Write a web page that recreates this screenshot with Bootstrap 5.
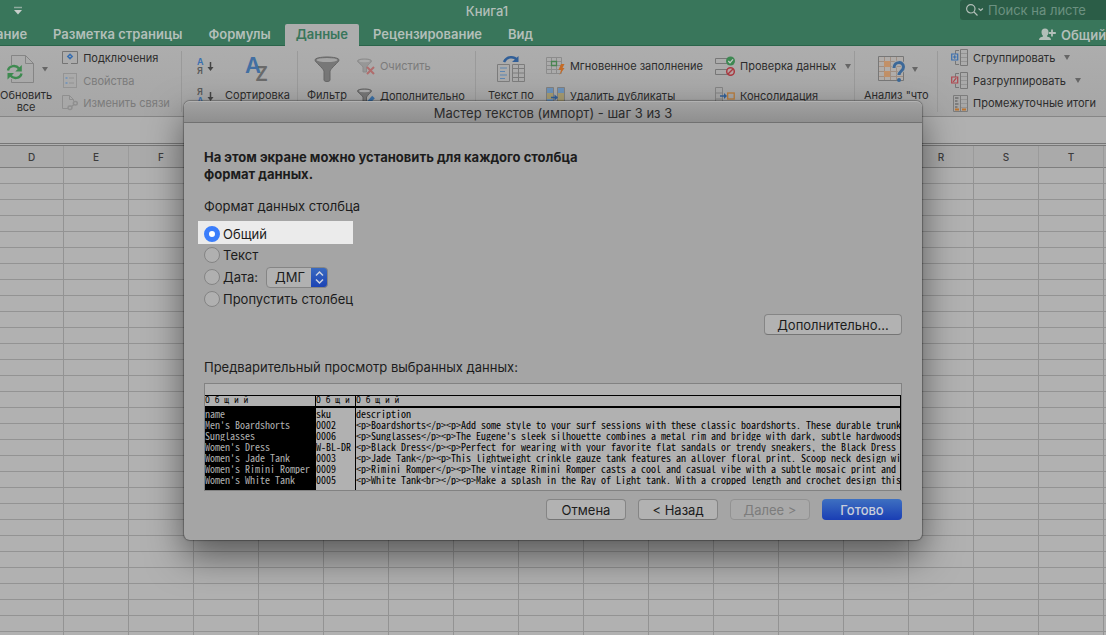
<!DOCTYPE html>
<html lang="ru">
<head>
<meta charset="utf-8">
<meta name="viewport" content="width=device-width, initial-scale=1">
<title>Книга1</title>
<link href="https://cdn.jsdelivr.net/npm/bootstrap@5.3.0/dist/css/bootstrap.min.css" rel="stylesheet">
<style>
body { font-family: Inter, "Liberation Sans", sans-serif; font-size: 13px; line-height: 16px; color: #1c1c1c; background: #b1b1b1; height: 100vh; overflow: hidden; }
button { font-family: inherit; }
svg { display: block; flex: none; }
main { min-height: 0; }

/* Title bar and tabs */
.app-head { background: #39765b; border-bottom: 1px solid #2a644a; color: #b3bfb9; }
.title-row { height: 24px; }
.doc-title { top: 3px; padding-right: 132px; font-weight: 500; }
.quick-menu { left: 14px; top: 6px; }
.search-box { background: #2b5d47; width: 146px; height: 20px; border-radius: 3px 0 0 3px; padding-left: 6px; gap: 4px; }
.search-box input { background: none; border: 0; padding: 0; width: 100%; outline: 0; color: #b3bfb9; }
.search-box input::placeholder { color: #6c9181; opacity: 1; }
.tab-row { height: 21px; font-weight: 600; }
.tab-row a { color: #b3bfb9; text-decoration: none; padding: 2px 13px 0; white-space: nowrap; }
.tab-row a.first-tab { padding-left: 0; margin-left: -4px; }
.tab-row a.active { background: #adadad; color: #39765b; padding: 2px 11px 0; margin: 0 1px; border-radius: 2px 2px 0 0; height: 22px; }
.share-btn { border: 0; background: none; color: #b3bfb9; font-weight: 600; padding: 0; width: 67px; white-space: nowrap; gap: 4px; }

/* Ribbon */
.ribbon { height: 71px; flex: none; background: linear-gradient(#adadad, #a6a6a6); border-bottom: 1px solid #868686; font-size: 11px; line-height: 12px; }
.rgroup { border-right: 1px solid #9a9a9a; margin: 5px 0 4px; flex: none; }
.rgroup:last-child { border: 0; }
.rgroup button { border: 0; background: none; padding: 0; color: #2c2c2c; white-space: nowrap; }
.rgroup button:disabled { color: #7b7b7b; }
.rgroup button.tall { display: flex; flex-direction: column; align-items: center; gap: 6px; padding-top: 4px; }
.tall .pic { height: 28px; display: flex; align-items: center; gap: 6px; }
.flat { display: flex; align-items: center; gap: 5px; height: 18px; }
.three { display: flex; flex-direction: column; gap: 5px; margin-top: -2px; }
.two { display: flex; flex-direction: column; gap: 12px; padding-top: 6px; }
.g-conn { width: 182px; gap: 10px; }
.g-sort { width: 116px; gap: 10px; padding-left: 15px; }
.g-filter { width: 178px; gap: 10px; padding-left: 9px; }
.g-data { width: 379px; gap: 12px; padding-left: 12px; }
.g-what { width: 83px; padding-left: 9px; }
.g-outline { padding-left: 13px; }

/* Sheet */
.formula-bar { height: 29px; border-bottom: 3px double #777; background: #b0b0b0; }
.sheet { table-layout: fixed; width: 1234px; border-collapse: separate; border-spacing: 0; }
.sheet col { width: 65px; }
.sheet col:first-child { width: 64px; }
.sheet th { height: 22px; padding: 0; text-align: center; font-weight: 500; font-size: 10px; line-height: 12px; color: #3c3c3c; background: #aaa; border-right: 1px solid #9b9b9b; border-bottom: 1px solid #7e7e7e; }
.sheet td { height: 16px; padding: 0; border-right: 1px solid #939393; border-bottom: 1px solid #939393; }

/* Wizard window */
.wizard { top: 101px; width: 738px; background: #a5a5a5; border-radius: 6px; box-shadow: 0 0 1px 1px rgba(0,0,0,.28), 0 16px 36px rgba(0,0,0,.5); }
.wizard-title { height: 22px; line-height: 22px; background: linear-gradient(#a1a1a1, #8f8f8f); border-bottom: 1px solid #717171; border-radius: 6px 6px 0 0; color: #2b2b2b; border-top: 1px solid #b2b2b2; }
.wizard-body { padding: 26px 20px 20px; }
.wizard-body h1 { font-size: 13px; line-height: 17px; font-weight: 700; margin: 0 0 15px; max-width: 400px; }
.wizard-body legend { font-size: 13px; line-height: 16px; margin: 0 0 7px; }
.pick { height: 22px; gap: 3px; }
.pick.chosen { background: #ebebeb; width: 155px; height: 23px; margin-left: -6px; padding: 2px 0 0 6px; }
.pick input { appearance: none; width: 16px; height: 16px; margin: 0; border-radius: 50%; background: #b0b0b0; border: 1px solid #848484; flex: none; }
.pick input:checked { border: 5px solid #3a7dfb; background: #fff; }
.date-select { appearance: none; height: 21px; width: 62px; margin-left: 5px; border: 1px solid #858585; border-radius: 4px; padding: 0 0 0 8px; font-size: 13px; color: #1c1c1c; line-height: 18px;
  background: url("data:image/svg+xml,%3Csvg xmlns='http://www.w3.org/2000/svg' width='17' height='21'%3E%3Cpath d='M5 8.500l3.500-3.500L12 8.500M5 12.500l3.500 3.500L12 12.500' fill='none' stroke='%23ccd3e2' stroke-width='1.500'/%3E%3C/svg%3E") right / 17px 21px no-repeat border-box, linear-gradient(#3b6cc0, #1a41b5) right / 17px 21px no-repeat border-box, #b1b1b1; }
.mac-btn { height: 21px; width: 80px; padding: 0; border: 1px solid #858585; border-bottom-color: #757575; border-radius: 4px; background: #b2b2b2; color: #1c1c1c; font-size: 13px; line-height: 18px; }
.mac-btn.wide-btn { width: 138px; }
.mac-btn:disabled { background: #a9a9a9; border-color: #929292; color: #7c7c7c; }
.mac-btn.go-btn { background: linear-gradient(#3e70c1, #1a3eb4); border: 0; color: #c9cedb; font-weight: 500; }
.wizard-actions { gap: 12px; }
.preview { margin-top: 8px; border: 1px solid #828282; background: #b1b1b1; padding-top: 11px; height: 108px; overflow: hidden; }
.preview table { table-layout: fixed; width: 100%; border-collapse: separate; border-spacing: 0; font-family: "Noto Sans Mono CJK SC", "DejaVu Sans Mono", monospace; font-size: 10px; line-height: 11px; color: #000; }
.preview th, .preview td { padding: 0; height: 11px; white-space: pre; overflow: hidden; font-weight: 400; border-right: 1px solid #000; }
.preview th { font-family: "DejaVu Sans Mono", monospace; font-size: 8px; border-top: 1px solid #000; border-bottom: 2px solid #000; height: 13px; line-height: 10px; }
.preview td:first-child { background: #000; color: #b1b1b1; }
.preview tr.tail td { height: 8px; }
</style>
</head>
<body class="d-flex flex-column">
<svg width="0" height="0" class="position-absolute" aria-hidden="true">
  <symbol id="tri" viewBox="0 0 6 5"><path d="M0 0h6L3 5z" fill="#666"/></symbol>
</svg>

<header class="app-head">
  <div class="title-row position-relative d-flex justify-content-end">
    <svg class="quick-menu position-absolute" width="8" height="9"><path d="M0 1.500h8" stroke="#8fab9e" stroke-width="1.500"/><path d="M0 4h8L4 8.500z" fill="#c8cecb"/></svg>
    <div class="doc-title position-absolute start-0 end-0 text-center pe-none">Книга1</div>
    <div class="search-box d-flex align-items-center">
      <svg width="18" height="12" fill="none" stroke="#b3bfb9" stroke-width="1.200"><circle cx="4.800" cy="4.800" r="4.200"/><path d="M8 8l3.500 3.500M12.500 4.500l2.200 2 2.200-2"/></svg>
      <input type="text" placeholder="Поиск на листе" aria-label="Поиск на листе">
    </div>
  </div>
  <div class="tab-row d-flex">
    <nav class="d-flex flex-grow-1" aria-label="Вкладки ленты">
      <a href="#" class="first-tab">ание</a>
      <a href="#">Разметка страницы</a>
      <a href="#">Формулы</a>
      <a href="#" class="active" aria-current="page">Данные</a>
      <a href="#">Рецензирование</a>
      <a href="#">Вид</a>
    </nav>
    <button class="share-btn d-flex align-items-center" type="button">
      <svg width="18" height="13" fill="#b3bfb9"><path d="M2.500 4a3.500 3.500 0 0 1 7 0c0 2-.8 3.200-1.500 3.700v.8c2 .6 4 1.200 4 3.500H0c0-2.300 2-2.900 4-3.500v-.8C3.300 7.200 2.500 6 2.500 4z"/><path d="M13 1.500v7M9.800 5h7" stroke="#b3bfb9" stroke-width="1.800"/></svg>
      <span>Общий</span>
    </button>
  </div>
</header>

<section class="ribbon d-flex overflow-hidden">
  <div class="rgroup g-conn d-flex">
    <button type="button" class="tall">
      <span class="pic"><svg width="46" height="28" viewBox="0 0 46 28" fill="none"><path d="M8.500.5h14l8 8v19h-22z" stroke="#858585"/><path d="M22.500.5v8h8" stroke="#858585"/><rect x="4" y="10" width="16" height="14" fill="#aaa"/><path d="M5 15.500c1-5 8-6 11-2M18.500 18.500c-1 5-8 6-11 2" stroke="#3e8a50" stroke-width="2.400"/><path d="M18.800 10v6.500h-6.500zM4.500 24.500V18H11z" fill="#3e8a50"/><path d="M39 12h6l-3 4.500z" fill="#666"/></svg></span>
      <span>Обновить<br>все</span>
    </button>
    <div class="three">
      <button type="button" class="flat"><svg width="16" height="15" fill="none"><path d="M.5 1.500h15v12H9M.5 1.500v12H6" stroke="#747474"/><path d="M8 4.200L10.200 6.400 8 8.600 5.800 6.400z" stroke="#3a6fb0" stroke-width="1.500"/></svg>Подключения</button>
      <button type="button" class="flat" disabled><svg width="16" height="15" fill="none"><rect x="1.500" y=".5" width="13" height="14" stroke="#949494"/><path d="M3.500 5h2M3.500 10h2" stroke="#7896b8" stroke-width="2"/><path d="M7 5h5M7 10h5" stroke="#929292"/></svg>Свойства</button>
      <button type="button" class="flat" disabled><svg width="16" height="16" fill="none" stroke="#8f8f8f"><path d="M6 13.500H.5V.5h7l4 4V6M7.500.5v4h4"/><g stroke-width="1.500"><rect x="6" y="11" width="4" height="3.500" rx="1.700"/><rect x="11.300" y="6.500" width="4" height="3.500" rx="1.700"/><path d="M9 12l3.500-3"/></g></svg>Изменить связи</button>
    </div>
  </div>

  <div class="rgroup g-sort d-flex">
    <div class="two">
      <button type="button" aria-label="Сортировка от А до Я" class="flat"><svg width="18" height="18" font-family="Inter" font-size="9" font-weight="600"><text x="0" y="8" fill="#3a6fb0">А</text><text x="0" y="17" fill="#5a5a5a">Я</text><path d="M13.500 5v7" stroke="#444" stroke-width="1.500"/><path d="M10.500 10h6l-3 4z" fill="#444"/></svg></button>
      <button type="button" aria-label="Сортировка от Я до А" class="flat"><svg width="18" height="18" font-family="Inter" font-size="9" font-weight="600"><text x="0" y="8" fill="#5a5a5a">Я</text><text x="0" y="17" fill="#3a6fb0">А</text><path d="M13.500 5v7" stroke="#444" stroke-width="1.500"/><path d="M10.500 10h6l-3 4z" fill="#444"/></svg></button>
    </div>
    <button type="button" class="tall"><span class="pic"><svg width="26" height="28" font-family="Inter" font-weight="600"><text x="11" y="26" font-size="20" fill="#6a6a6a">Z</text><text x="1" y="18" font-size="22" fill="#426fa2">A</text></svg></span><span>Сортировка</span></button>
  </div>

  <div class="rgroup g-filter d-flex">
    <button type="button" class="tall"><span class="pic"><svg width="26" height="26"><path d="M1 4c0-4 24-4 24 0 0 2-8 8-9 11v9c0 2-6 2-6 0v-9C9 12 1 6 1 4z" fill="#777" stroke="#666"/><ellipse cx="13" cy="4" rx="10.500" ry="2" fill="#a5a5a5"/></svg></span><span>Фильтр</span></button>
    <div class="two">
      <button type="button" class="flat" disabled><svg width="18" height="17"><path d="M.5 3c0-2.700 14-2.700 14 0 0 1.300-4 4-5 6v5H6V9C5 7 .5 4.300.5 3z" fill="#979797" stroke="#8b8b8b"/><ellipse cx="7.500" cy="3" rx="5.500" ry="1.200" fill="#aaa"/><path d="M10 9l7 7M17 9l-7 7" stroke="#b06d6d" stroke-width="2"/></svg>Очистить</button>
      <button type="button" class="flat"><svg width="18" height="17"><path d="M.5 3c0-2.700 14-2.700 14 0 0 1.300-4 4-5 6v5H6V9C5 7 .5 4.300.5 3z" fill="#777" stroke="#606060"/><ellipse cx="7.500" cy="3" rx="5.500" ry="1.200" fill="#aaa"/><path d="M11 15l5.500-6" stroke="#3a6fa5" stroke-width="3.500"/></svg>Дополнительно</button>
    </div>
  </div>

  <div class="rgroup g-data d-flex">
    <button type="button" class="tall"><span class="pic"><svg width="28" height="28" fill="none"><path d="M7 7c3-6 10-6 13-2" stroke="#315f98" stroke-width="2.500"/><path d="M21.500 1v6h-6.500z" fill="#315f98"/><path d="M.5 9.500h12v17H.5zM15.500 9.500h12v17h-12zM15.500 13.500h12M15.500 18h12M15.500 22.500h12M21.500 9.500v17" stroke="#7c7c7c"/><path d="M3 13h7M3 16.500h5M3 20h7M3 23.500h5" stroke="#5d86b1"/></svg></span><span>Текст по</span></button>
    <div class="two">
      <button type="button" class="flat"><svg width="19" height="18" fill="none"><path d="M.5.5h15v16H.5zM.5 4.500h15M.5 8.500h15M.5 12.500h15M5.500.5v16M10.500.5v16" stroke="#8c8c8c"/><path d="M5.500 4.500h5v4h-5z" stroke="#488551" stroke-width="1.300"/><path d="M15 7h3.500l-2 4h2l-5 7 1.500-5h-2.500z" fill="#c46b27"/></svg>Мгновенное заполнение</button>
      <button type="button" class="flat"><svg width="19" height="18" fill="none"><path d="M.5.5h7v17h-7zM11.500.5h7v17h-7z" fill="#a79c72" stroke="#808080"/><path d="M1 1h6v5H1zM12 1h6v5h-6zM1 12h6v5H1z" fill="#6c93bb"/><path d="M5 10.500h5" stroke="#315f98" stroke-width="1.500"/><path d="M8.500 7.500v6l3.500-3z" fill="#315f98"/></svg>Удалить дубликаты</button>
    </div>
    <div class="two">
      <button type="button" class="flat"><svg width="20" height="20" fill="none"><path d="M.5 2.500h12v5H.5zM.5 13.500h12v5H.5z" stroke="#777"/><circle cx="15.500" cy="5" r="4.500" fill="#3d8852"/><path d="M13.300 5l1.700 1.800 3-3.500" stroke="#c1c9c3" stroke-width="1.300"/><circle cx="15.500" cy="15.500" r="3.800" fill="#b5a5a5" stroke="#a93a42" stroke-width="1.500"/><path d="M13 18l5-5" stroke="#a93a42" stroke-width="1.500"/></svg><span class="me-1">Проверка данных</span><svg width="6" height="5"><use href="#tri"/></svg></button>
      <button type="button" class="flat"><svg width="20" height="18" fill="none"><path d="M.5.500h7v17h-7zM.5 6h7M.5 12h7" stroke="#858585"/><path d="M5 9h5" stroke="#315f98" stroke-width="1.500"/><path d="M9 6v6l3-3z" fill="#315f98"/><rect x="12.700" y="6" width="6.500" height="6" stroke="#ba7c3a" stroke-width="1.300"/></svg>Консолидация</button>
    </div>
  </div>

  <div class="rgroup g-what d-flex">
    <button type="button" class="tall"><span class="pic"><svg class="ms-1" width="28" height="28" fill="none"><path d="M.5 1.500h25v24H.5z" fill="#b1adaa"/><path d="M.5 6.500h25M.5 11.500h25M.5 16.500h25M.5 21.500h25M6.500 1.500v24M12.500 1.500v24M18.500 1.500v24" stroke="#a08f83"/><path d="M.5 1.500h25v24H.5z" stroke="#777"/><path d="M6 6h6v6H6zM6 16h6v6H6z" fill="#c29067"/><path d="M16 13c0-7 9.500-7 9.500-1 0 4-4.500 4-4.500 8" stroke="#aaa" stroke-width="5"/><path d="M16 13c0-7 9.500-7 9.500-1 0 4-4.500 4-4.500 8" stroke="#3c6898" stroke-width="3"/><circle cx="21" cy="25" r="2" fill="#3c6898"/></svg><svg width="6" height="5"><use href="#tri"/></svg></span><span>Анализ "что</span></button>
  </div>

  <div class="rgroup g-outline d-flex">
    <div class="three">
      <button type="button" class="flat"><svg width="17" height="17" fill="none"><path d="M9.500.500h7v16h-7z" stroke="#777"/><path d="M10 4.500h6M10 8.500h6M10 12.500h6" stroke="#949494"/><path d="M8 1.500H4.500V5M4.500 12v3.500H8" stroke="#777"/><path d="M.7 5h6v6h-6zM3.700 6.200v3.600M1.900 8h3.600" stroke="#3a6fb0" stroke-width="1.200"/></svg><span class="me-1">Сгруппировать</span><svg width="6" height="5"><use href="#tri"/></svg></button>
      <button type="button" class="flat"><svg width="17" height="17" fill="none"><path d="M9.500.500h7v16h-7z" stroke="#777"/><path d="M10 4.500h6M10 8.500h6M10 12.500h6" stroke="#949494"/><path d="M8 1.500H4.500V5M4.500 12v3.500H8" stroke="#777"/><path d="M.7 5h6v6h-6zM2.200 9.800l3-3.600" stroke="#b0444c" stroke-width="1.200"/></svg><span class="me-1">Разгруппировать</span><svg width="6" height="5"><use href="#tri"/></svg></button>
      <button type="button" class="flat"><svg width="17" height="17" fill="none"><path d="M2.500.500h14v16h-14zM9.500.500v16" stroke="#7c7c7c"/><path d="M10 4.500h6M10 8.500h6M10 12.500h6" stroke="#949494"/><path d="M4 3h3.500M4 6h2.500M4 9h3.500M4 12h2.500" stroke="#555"/><path d="M4 14.500h4M11 14.500h4" stroke="#bd742f" stroke-width="2"/></svg>Промежуточные итоги</button>
    </div>
  </div>
</section>

<main class="flex-fill overflow-hidden">
  <div class="formula-bar"></div>
  <table class="sheet">
    <colgroup id="cols"></colgroup>
    <thead><tr id="letters"></tr></thead>
    <tbody id="cells"></tbody>
  </table>
</main>

<div class="position-absolute start-0 end-0 mx-auto wizard" role="dialog" aria-labelledby="wizTitle">
  <div class="wizard-title text-center" id="wizTitle">Мастер текстов (импорт) - шаг 3 из 3</div>
  <form class="wizard-body">
    <h1>На этом экране можно установить для каждого столбца формат данных.</h1>
    <fieldset>
      <legend>Формат данных столбца</legend>
      <div class="pick chosen d-flex align-items-center"><input type="radio" name="fmt" id="fGeneral" checked><label for="fGeneral">Общий</label></div>
      <div class="pick d-flex align-items-center"><input type="radio" name="fmt" id="fText"><label for="fText">Текст</label></div>
      <div class="pick d-flex align-items-center"><input type="radio" name="fmt" id="fDate"><label for="fDate">Дата:</label>
        <select class="date-select" aria-label="Порядок даты"><option>ДМГ</option></select></div>
      <div class="pick d-flex align-items-center"><input type="radio" name="fmt" id="fSkip"><label for="fSkip">Пропустить столбец</label></div>
    </fieldset>
    <div class="d-flex justify-content-end mt-1"><button type="button" class="mac-btn wide-btn">Дополнительно...</button></div>
    <div class="mt-4">Предварительный просмотр выбранных данных:</div>
    <div class="preview">
      <table>
        <colgroup><col style="width:111px"><col style="width:40px"><col></colgroup>
        <thead><tr><th>О б щ и й</th><th>О б щ и</th><th>О б щ и й</th></tr></thead>
        <tbody>
          <tr><td>name</td><td>sku</td><td>description</td></tr>
          <tr><td>Men's Boardshorts</td><td>0002</td><td>&lt;p&gt;Boardshorts&lt;/p&gt;&lt;p&gt;Add some style to your surf sessions with these classic boardshorts. These durable trunk</td></tr>
          <tr><td>Sunglasses</td><td>0006</td><td>&lt;p&gt;Sunglasses&lt;/p&gt;&lt;p&gt;The Eugene's sleek silhouette combines a metal rim and bridge with dark, subtle hardwoods</td></tr>
          <tr><td>Women's Dress</td><td>W-BL-DR</td><td>&lt;p&gt;Black Dress&lt;/p&gt;&lt;p&gt;Perfect for wearing with your favorite flat sandals or trendy sneakers, the Black Dress</td></tr>
          <tr><td>Women's Jade Tank</td><td>0003</td><td>&lt;p&gt;Jade Tank&lt;/p&gt;&lt;p&gt;This lightweight crinkle gauze tank features an allover floral print. Scoop neck design wi</td></tr>
          <tr><td>Women's Rimini Romper</td><td>0009</td><td>&lt;p&gt;Rimini Romper&lt;/p&gt;&lt;p&gt;The vintage Rimini Romper casts a cool and casual vibe with a subtle mosaic print and</td></tr>
          <tr><td>Women's White Tank</td><td>0005</td><td>&lt;p&gt;White Tank&lt;br&gt;&lt;/p&gt;&lt;p&gt;Make a splash in the Ray of Light tank. With a cropped length and crochet design this</td></tr>
          <tr class="tail"><td></td><td></td><td></td></tr>
        </tbody>
      </table>
    </div>
    <div class="d-flex justify-content-end mt-2 wizard-actions">
      <button type="button" class="mac-btn">Отмена</button>
      <button type="button" class="mac-btn">&lt; Назад</button>
      <button type="button" class="mac-btn" disabled>Далее &gt;</button>
      <button type="submit" class="mac-btn go-btn">Готово</button>
    </div>
  </form>
</div>

<script>
  // Columns under the wizard window carry no caption.
  const letters = ['D','E','F','','','','','','','','','','','','R','S','T','',''];
  document.getElementById('cols').innerHTML = '<col>'.repeat(letters.length);
  document.getElementById('letters').innerHTML = letters.map(l => `<th>${l}</th>`).join('');
  document.getElementById('cells').innerHTML = ('<tr>' + '<td></td>'.repeat(letters.length) + '</tr>').repeat(60);
</script>
<script src="https://cdn.jsdelivr.net/npm/bootstrap@5.3.0/dist/js/bootstrap.bundle.min.js"></script>
</body>
</html>
